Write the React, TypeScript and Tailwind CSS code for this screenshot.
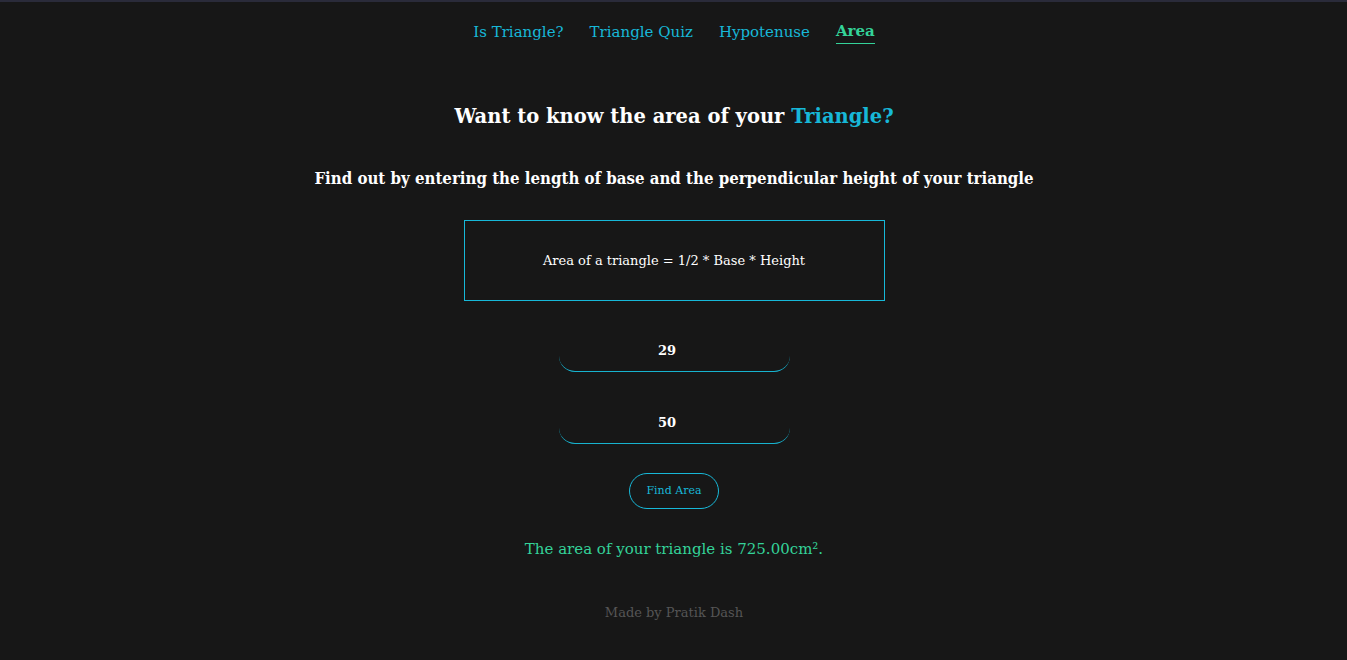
import { useState } from 'react'

const SERIF = 'font-["DejaVu_Serif","Liberation_Serif",serif]'

const links = ['Is Triangle?', 'Triangle Quiz', 'Hypotenuse', 'Area']

function Field({ value, onChange }: { value: string; onChange: (v: string) => void }) {
  return (
    <input
      type="number"
      value={value}
      onChange={(e) => onChange(e.target.value)}
      className="h-[42px] w-[231px] appearance-none rounded-b-[16px] border-0 border-b border-[#17b3cf] bg-transparent pr-[14px] text-center text-[13px] font-bold text-white outline-none [-moz-appearance:textfield] [&::-webkit-inner-spin-button]:appearance-none"
    />
  )
}

export default function App() {
  const [base, setBase] = useState('29')
  const [height, setHeight] = useState('50')
  const [area, setArea] = useState<number | null>(725)

  function calc() {
    setArea(0.5 * Number(base) * Number(height))
  }

  return (
    <div className={`min-h-[660px] border-t-2 border-[#2a2b3a] bg-[#171717] pl-px ${SERIF}`}>
      <nav className="flex justify-center gap-[26px] pt-[18px] text-[15px] leading-[24px]">
        {links.map((l) =>
          l === 'Area' ? (
            <a key={l} className="border-b border-[#34d399] font-bold leading-[22px] text-[#34d399]">
              {l}
            </a>
          ) : (
            <a key={l} className="text-[#17b8d8]">
              {l}
            </a>
          )
        )}
      </nav>

      <main className="flex flex-col items-center">
        <h1 className="mt-[58px] text-[19.5px] font-bold leading-[30px] text-white">
          Want to know the area of your <span className="text-[#17b8d8]">Triangle?</span>
        </h1>
        <h2 className="mt-[34px] text-[16.7px] font-bold leading-[24px] text-white [font-stretch:condensed]">
          Find out by entering the length of base and the perpendicular height of your triangle
        </h2>

        <div className="mt-[30px] flex h-[81px] w-[421px] items-center justify-center border border-[#17b8d8] text-[13px] text-white">
          Area of a triangle = 1/2 * Base * Height
        </div>

        <div className="mt-[29px]">
          <Field value={base} onChange={setBase} />
        </div>
        <div className="mt-[30px]">
          <Field value={height} onChange={setHeight} />
        </div>

        <button
          onClick={calc}
          className="mt-[29px] h-[36px] w-[90px] rounded-full border border-[#17b8d8] text-[11px] text-[#17b8d8]"
        >
          Find Area
        </button>

        {area !== null && (
          <p className="mt-[28px] text-[15px] leading-[24px] text-[#34d399]">
            The area of your triangle is {area.toFixed(2)}cm².
          </p>
        )}

        <footer className="mt-[42px] text-[13px] leading-[20px] text-[#555555]">Made by Pratik Dash</footer>
      </main>
    </div>
  )
}
